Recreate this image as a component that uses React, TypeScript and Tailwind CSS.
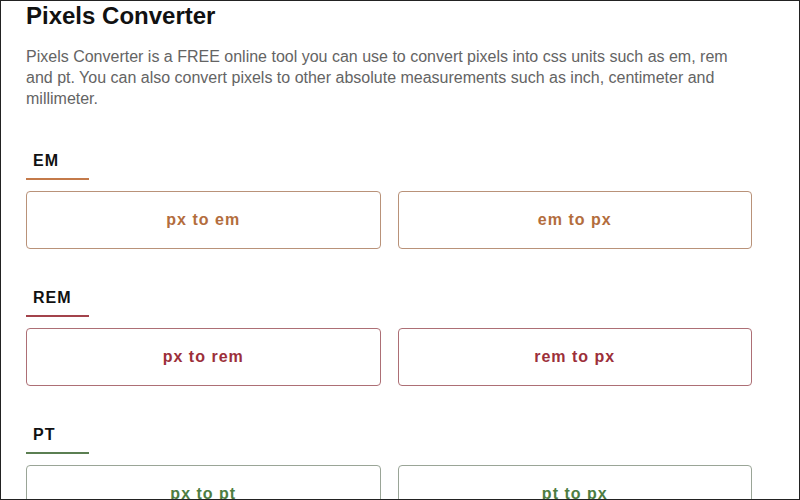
const sections = [
  {
    title: "EM",
    line: "border-[#c47a4a]",
    box: "border-[#b99279] text-[#b36d3d]",
    buttons: ["px to em", "em to px"],
  },
  {
    title: "REM",
    line: "border-[#a3434b]",
    box: "border-[#ad6f75] text-[#9c2f3a]",
    buttons: ["px to rem", "rem to px"],
  },
  {
    title: "PT",
    line: "border-[#5b7f52]",
    box: "border-[#9aa597] text-[#4e7d42]",
    buttons: ["px to pt", "pt to px"],
  },
];

export default function App() {
  return (
    <div className="w-[800px] h-[500px] overflow-hidden border border-[#222] bg-white font-['Liberation_Sans',Arial,sans-serif]">
      <div className="pl-[25px] w-[751px]">
        <h1 className="text-[24px] leading-[29px] font-bold text-[#111]">Pixels Converter</h1>
        <p className="mt-[17px] text-[16px] leading-[20.8px] text-[#646464]">
          Pixels Converter is a FREE online tool you can use to convert pixels into css units such as em, rem
          and pt. You can also convert pixels to other absolute measurements such as inch, centimeter and
          millimeter.
        </p>

        <div className="mt-[40px] flex flex-col gap-[37px]">
          {sections.map((s) => (
            <section key={s.title}>
              <h2
                className={`w-[63px] pl-[7px] pb-[5px] border-b-2 text-[16px] leading-[24px] font-bold tracking-[1px] text-[#111] ${s.line}`}
              >
                {s.title}
              </h2>
              <div className="mt-[11px] grid grid-cols-2 gap-[17px]">
                {s.buttons.map((b) => (
                  <button
                    key={b}
                    className={`h-[58px] rounded-[4px] border bg-white text-[16px] font-bold tracking-[1px] ${s.box}`}
                  >
                    {b}
                  </button>
                ))}
              </div>
            </section>
          ))}
        </div>
      </div>
    </div>
  );
}
